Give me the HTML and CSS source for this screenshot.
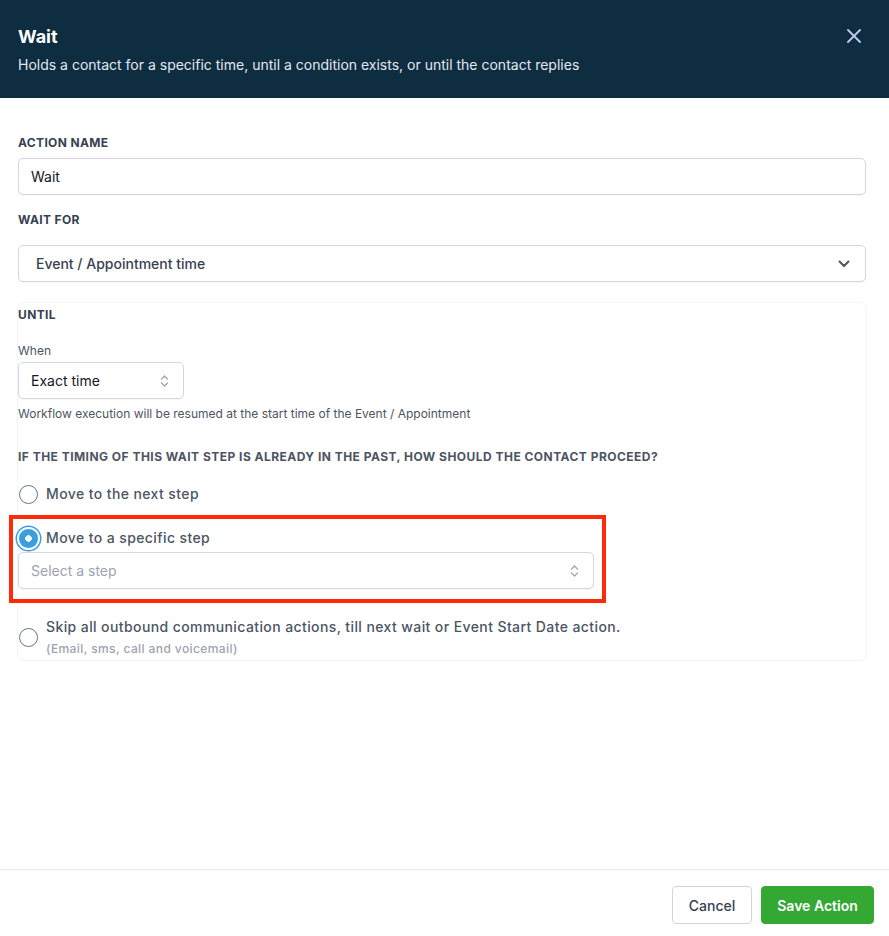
FILE: index.html
```html
<!DOCTYPE html>
<html>
<head>
<meta charset="utf-8">
<link rel="stylesheet" href="styles.css">
</head>
<body>
<div class="panel">
  <header class="head">
    <div class="head-text">
      <h1 class="title">Wait</h1>
      <p class="subtitle">Holds a contact for a specific time, until a condition exists, or until the contact replies</p>
    </div>
    <button class="close" aria-label="Close">
      <svg width="14" height="14" viewBox="0 0 14 14"><path d="M1 1L13 13M13 1L1 13" stroke="#c3cbef" stroke-width="1.8" stroke-linecap="round"/></svg>
    </button>
  </header>

  <main class="body">
    <label class="label">ACTION NAME</label>
    <div class="input mt8">Wait</div>

    <label class="label mt17">WAIT FOR</label>
    <div class="input select mt17">
      <span class="select-value">Event / Appointment time</span>
      <svg width="12" height="8" viewBox="0 0 12 8"><path d="M1.5 1.5L6 6L10.5 1.5" fill="none" stroke="#4b5563" stroke-width="2" stroke-linecap="round" stroke-linejoin="round"/></svg>
    </div>

    <section class="card">
      <div class="label">UNTIL</div>
      <div class="small-label">When</div>
      <div class="input small-select">
        <span>Exact time</span>
        <svg class="updown" width="9" height="14" viewBox="0 0 9 14"><path d="M1.5 5L4.5 2L7.5 5M1.5 9L4.5 12L7.5 9" fill="none" stroke="#9ca3af" stroke-width="1.2" stroke-linecap="round" stroke-linejoin="round"/></svg>
      </div>
      <div class="helper">Workflow execution will be resumed at the start time of the Event / Appointment</div>

      <div class="label question">IF THE TIMING OF THIS WAIT STEP IS ALREADY IN THE PAST, HOW SHOULD THE CONTACT PROCEED?</div>

      <div class="radio-row r1">
        <span class="radio"></span>
        <span class="radio-text">Move to the next step</span>
      </div>

      <div class="highlight">
        <div class="radio-row r2">
          <span class="radio checked"></span>
          <span class="radio-text">Move to a specific step</span>
        </div>
        <div class="input select step-select">
          <span class="placeholder">Select a step</span>
          <svg class="updown" width="9" height="14" viewBox="0 0 9 14"><path d="M1.5 5L4.5 2L7.5 5M1.5 9L4.5 12L7.5 9" fill="none" stroke="#9ca3af" stroke-width="1.2" stroke-linecap="round" stroke-linejoin="round"/></svg>
        </div>
      </div>

      <div class="radio-row r3">
        <span class="radio"></span>
        <span class="radio-stack">
          <span class="radio-text">Skip all outbound communication actions, till next wait or Event Start Date action.</span>
          <span class="radio-sub">(Email, sms, call and voicemail)</span>
        </span>
      </div>
    </section>
  </main>

  <footer class="foot">
    <button class="btn btn-cancel">Cancel</button>
    <button class="btn btn-save">Save Action</button>
  </footer>
</div>
</body>
</html>
```

FILE: styles.css
```css
*, *::before, *::after { box-sizing: border-box; }
html, body { margin: 0; padding: 0; }
body {
  font-family: Inter, "Liberation Sans", Arial, sans-serif;
  background: #ffffff;
  color: #111827;
  width: 889px;
  height: 936px;
  overflow: hidden;
}
.panel {
  display: flex;
  flex-direction: column;
  height: 936px;
}
.head {
  background: #0e2d41;
  height: 98px;
  padding: 26px 18px 0 18px;
  display: flex;
  justify-content: space-between;
  align-items: flex-start;
}
.title {
  margin: 0;
  font-size: 18px;
  line-height: 22px;
  font-weight: 700;
  color: #ffffff;
}
.subtitle {
  margin: 7px 0 0 0;
  font-size: 14px;
  line-height: 20px;
  color: #e3e8ee;
}
.close {
  background: none;
  border: 0;
  padding: 0;
  margin: 3px 10px 0 0;
  width: 14px;
  height: 14px;
  display: flex;
}
.body {
  flex: 1;
  padding: 37px 23px 0 18px;
}
.label {
  display: block;
  font-size: 12px;
  line-height: 16px;
  font-weight: 700;
  color: #374151;
  letter-spacing: 0.35px;
}
.mt8 { margin-top: 7px; }
.mt17 { margin-top: 17px; }
.input {
  height: 37px;
  border: 1px solid #d3d6dd;
  border-radius: 5px;
  background: #fff;
  font-size: 14px;
  line-height: 20px;
  padding: 8px 12px;
  color: #111827;
  box-shadow: 0 1px 1px rgba(0,0,0,0.03);
}
.select {
  display: flex;
  align-items: center;
  justify-content: space-between;
  padding: 0 15px 0 17px;
}
.select-value {
  font-weight: 500;
  color: #374151;
}
.card {
  margin-top: 21px;
  padding: 4px 0 0 0;
  border-radius: 6px;
  box-shadow: 0 0 0 1px #f4f5f7, 0 1px 2px rgba(0,0,0,0.03);
  height: 357px;
}
.small-label {
  margin-top: 20px;
  font-size: 12px;
  line-height: 16px;
  color: #4b5563;
}
.small-select {
  margin-top: 3px;
  width: 166px;
  display: flex;
  align-items: center;
  justify-content: space-between;
  padding: 0 14px 0 12px;
}
.helper {
  margin-top: 7px;
  font-size: 12px;
  line-height: 16px;
  color: #4b5563;
}
.question {
  margin-top: 27px;
  color: #4b5563;
  letter-spacing: 0.47px;
}
.radio-row {
  display: flex;
  align-items: center;
  gap: 8px;
}
.r1 { margin-top: 19px; padding-left: 1px; }
.radio {
  width: 19px;
  height: 19px;
  border-radius: 50%;
  border: 1px solid #6b7280;
  background: #fff;
  flex: none;
}
.radio.checked {
  border: 0;
  background: radial-gradient(circle, #ffffff 0 3px, #3b9ede 3.5px);
  box-shadow: 0 0 0 2px #ffffff, 0 0 0 3.5px #3b9ede;
}
.radio-text {
  font-size: 14px;
  line-height: 20px;
  font-weight: 500;
  color: #4b5563;
  letter-spacing: 0.4px;
}
.highlight {
  position: relative;
  margin-top: 24px;
  padding-left: 1px;
}
.highlight::before {
  content: "";
  position: absolute;
  left: -9px;
  top: -13px;
  width: 597px;
  height: 88px;
  border: 4px solid #ff2a0a;
  pointer-events: none;
}
.step-select {
  margin-top: 4px;
  margin-left: -1px;
  width: 576px;
  padding: 0 14px 0 12px;
}
.placeholder {
  color: #9ca3af;
}
.r3 {
  margin-top: 28px;
  padding-left: 1px;
  align-items: center;
}
.radio-stack {
  display: flex;
  flex-direction: column;
}
.radio-sub {
  margin-top: 4px;
  font-size: 12px;
  line-height: 16px;
  font-weight: 500;
  color: #9ca3af;
  letter-spacing: 0.4px;
}
.foot {
  height: 67px;
  border-top: 1px solid #e5e7eb;
  display: flex;
  justify-content: flex-end;
  align-items: flex-start;
  gap: 9px;
  padding: 16px 15px 0 0;
}
.btn {
  height: 38px;
  border-radius: 4px;
  font-family: inherit;
  font-size: 14px;
  font-weight: 600;
  padding: 0 10px;
  white-space: nowrap;
}
.btn-cancel {
  width: 80px;
  background: #fff;
  border: 1px solid #d1d5db;
  color: #374151;
  font-weight: 500;
}
.btn-save {
  width: 113px;
  background: #33a833;
  border: 1px solid #33a833;
  color: #ffffff;
}
```
